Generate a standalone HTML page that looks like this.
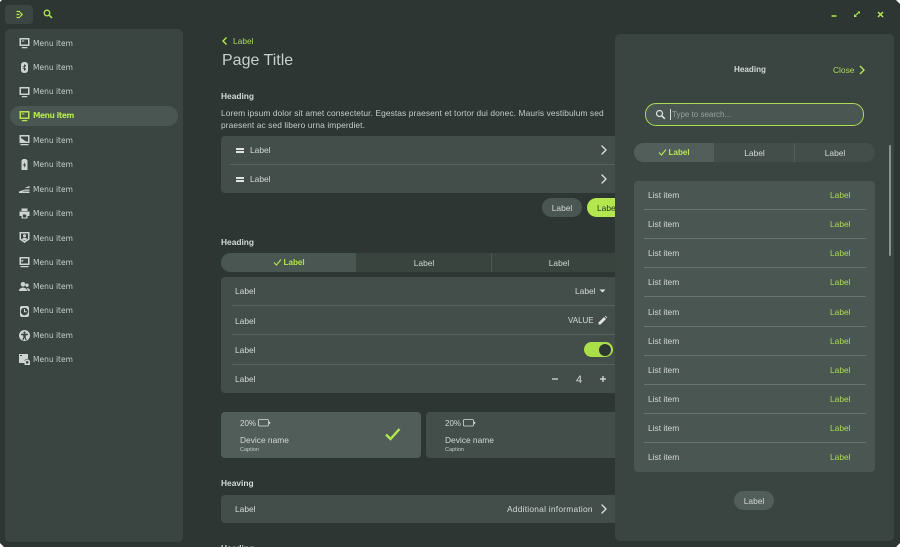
<!DOCTYPE html>
<html lang="en"><head><meta charset="utf-8"><title>Settings</title>
<style>
html,body{margin:0;padding:0;background:#2d3633}
#w{position:relative;width:900px;height:547px;overflow:hidden;background:#2d3633;font-family:"Liberation Sans",sans-serif;font-size:8.4px;color:#d3d8d5}
#w div,#w span,#w svg{position:absolute}
.t{height:12px;line-height:12px;white-space:nowrap}
.m{font-family:"DejaVu Sans",sans-serif;font-size:7.5px;left:33px;color:#c5cbc8;height:12px;line-height:12px;white-space:nowrap}
.h{font-weight:bold;color:#d3d8d5}
.a{color:#a9dc50}
.d{height:1px;background:#566360}
.i{left:19px;width:11px;height:11px;fill:#cfd4d1}
.c{fill:none;stroke:#d8dcda;stroke-width:1.4;stroke-linecap:round;stroke-linejoin:round}
.ce{text-align:center}
</style></head><body><div id="w">

<div style="left:5px;top:5px;width:28px;height:19px;background:#3b4642;border-radius:4px"></div>
<svg style="left:15px;top:10px" width="9" height="9" viewBox="0 0 9 9"><path d="M1.500 1.500h3.500M1.500 4.500h3M1.500 7.500h3.500M5 2.200l2.200 2.300L5 6.800" fill="none" stroke="#b2e84e" stroke-width="1.200"/></svg>
<svg style="left:43px;top:9px" width="10" height="10" viewBox="0 0 10 10"><circle cx="4" cy="4" r="2.800" fill="none" stroke="#b2e84e" stroke-width="1.300"/><path d="M6 6l3 3" stroke="#b2e84e" stroke-width="1.500"/></svg>
<svg style="left:830px;top:11px" width="8" height="8" viewBox="0 0 8 8"><path d="M1.500 5h5" stroke="#b2e84e" stroke-width="1.500"/></svg>
<svg style="left:853px;top:10px" width="8" height="8" viewBox="0 0 8 8"><path d="M2.500 5.500l3-3" stroke="#b2e84e" stroke-width="1.200"/><path d="M4.500 1.500h2.500v2.500zM1 4v3h3z" fill="#b2e84e"/></svg>
<svg style="left:877px;top:11px" width="7" height="7" viewBox="0 0 7 7"><path d="M1 1l5 5M6 1L1 6" stroke="#b2e84e" stroke-width="1.500"/></svg>

<div style="left:5px;top:29px;width:178px;height:513px;background:#3a4541;border-radius:5px"></div>
<div style="left:10px;top:106px;width:168px;height:20px;background:#4a5652;border-radius:10px"></div>

<svg class="i" style="top:38px" viewBox="0 0 11 11"><path fill-rule="evenodd" d="M.5 0h10v8H.5zM2 1.500v5h7v-5zM2.800 2.500h2.500v1H2.800zM2.800 9h5.500v1.300H2.800z"/></svg><span class="m" style="top:38px">Menu item</span>
<svg class="i" style="top:62px" viewBox="0 0 11 11"><path fill-rule="evenodd" d="M5.500 0C8 0 9 1.500 9 3v5c0 1.500-1 3-3.500 3S2 9.500 2 8V3c0-1.500 1-3 3.500-3zM5 2v2.800L3.800 3.800l-.5.500 1.700 1.200-1.700 1.200.5.500L5 6.200V9l2.200-1.700-1.600-1.800 1.600-1.800z"/></svg><span class="m" style="top:62px">Menu item</span>
<svg class="i" style="top:87px" viewBox="0 0 11 11"><path fill-rule="evenodd" d="M.5 0h10v8H.5zM2 1.500v5h7v-5zM2.800 9h5.500v1.300H2.800z"/></svg><span class="m" style="top:86px">Menu item</span>
<svg class="i" style="top:111px;fill:#b2e84e" viewBox="0 0 11 11"><path fill-rule="evenodd" d="M.5 0h10v8H.5zM2 1.500v5h7v-5zM2.800 2.500h2.500v1H2.800zM2.800 9h5.500v1.300H2.800z"/></svg><span class="m" style="top:110px;font-weight:bold;color:#b2e84e;letter-spacing:-.45px">Menu item</span>
<svg class="i" style="top:135px" viewBox="0 0 11 11"><path fill-rule="evenodd" d="M.5 0h10v8H.5zM2 1.500v5h7v-5zM2 3l5 3.500H2zM1.500 9h8v1.200h-8z"/></svg><span class="m" style="top:135px">Menu item</span>
<svg class="i" style="top:159px" viewBox="0 0 11 11"><path fill-rule="evenodd" d="M2.500 1.500L4 0h3l1.500 1.500V11h-6zM5.800 3L4 6.500h1.300V9L7.200 5.500H5.800z"/></svg><span class="m" style="top:159px">Menu item</span>
<svg class="i" style="top:184px" viewBox="0 0 11 11"><path d="M0 7.500L6 5.500h4.500v1.200H5L3.500 7.500H10.500v1.500H0zM6.500 3.500l4-1.500v2h-4z"/></svg><span class="m" style="top:183.500px">Menu item</span>
<svg class="i" style="top:208px" viewBox="0 0 11 11"><path fill-rule="evenodd" d="M2.500 .5h6V3h-6zM.5 3.500h10V8H8.500v2.500h-6V8h-2zM3.800 6.500v3h3.400v-3z"/></svg><span class="m" style="top:208px">Menu item</span>
<svg class="i" style="top:232px" viewBox="0 0 11 11"><path fill-rule="evenodd" d="M.5 0h10v7.500L5.500 11 .5 7.500zM2 1.500v5.200l3.500 2.400L9 6.700V1.500zM5.500 2.300a1.500 1.500 0 110 3 1.500 1.500 0 010-3zM3 7.300c0-2.100 5-2.100 5 0L5.500 8.500z"/></svg><span class="m" style="top:232.500px">Menu item</span>
<svg class="i" style="top:257px" viewBox="0 0 11 11"><path fill-rule="evenodd" d="M.5 0h10v8H.5zM2 1.500v5h7v-5zM2.500 2.500l2.300 1.300-2.300 1.300zM1.500 9h8v1.200h-8z"/></svg><span class="m" style="top:257px">Menu item</span>
<svg class="i" style="top:281px" viewBox="0 0 11 11"><path d="M4 1a2.300 2.300 0 110 4.600A2.300 2.300 0 014 1zM8 2.500a1.700 1.700 0 110 3.400 1.700 1.700 0 010-3.400zM0 10c0-4.500 8-4.500 8 0zM8.700 10c0-1.200-.5-2.400-1.200-3 1.700 0 3.500 1 3.500 3z"/></svg><span class="m" style="top:281px">Menu item</span>
<svg class="i" style="top:306px" viewBox="0 0 11 11"><path fill-rule="evenodd" d="M2 0h7l1 1.500v8L9 11H2L1 9.500v-8zM5.500 1.800a3.700 3.700 0 100 7.400 3.700 3.700 0 000-7.400zM5 3h1v2.300h1.700v1H5z"/></svg><span class="m" style="top:305px">Menu item</span>
<svg class="i" style="top:330px" viewBox="0 0 11 11"><path fill-rule="evenodd" d="M5.500 0a5.500 5.500 0 110 11 5.500 5.500 0 010-11zM5.500 1.500a1.100 1.100 0 100 2.200 1.100 1.100 0 000-2.200zM2 3.800v1.200l2.300.5v1.800L3.300 10l1 .4 1.200-2.600 1.200 2.600 1-.4-1-2.700V5.500L9 5V3.800z"/></svg><span class="m" style="top:330px">Menu item</span>
<svg class="i" style="top:354px" viewBox="0 0 11 11"><path fill-rule="evenodd" d="M0 0h9v5H7L5.500 6.500V9H0zM1 1v1h2V1zM7.500 5.500h2l1.500 1.500v4H5.500V7zM8.200 7a1.300 1.300 0 100 2.600 1.300 1.300 0 000-2.600z"/></svg><span class="m" style="top:354px">Menu item</span>

<svg style="left:221px;top:36px" width="8" height="10" viewBox="0 0 8 10"><path d="M5.500 1.500L2 5l3.500 3.500" fill="none" stroke="#b2e84e" stroke-width="1.400"/></svg>
<span class="t a" style="left:233px;top:35px">Label</span>
<span class="t" style="left:222px;top:50px;height:21px;line-height:21px;font-size:16px;color:#c9cfcc">Page Title</span>
<span class="t h" style="left:221px;top:90px">Heading</span>
<span class="t" style="left:221px;top:107px;color:#c5cbc8;letter-spacing:.09px">Lorem ipsum dolor sit amet consectetur. Egestas praesent et tortor dui donec. Mauris vestibulum sed</span>
<span class="t" style="left:221px;top:119px;color:#c5cbc8;letter-spacing:.09px">praesent ac sed libero urna imperdiet.</span>

<div style="left:221px;top:136px;width:420px;height:57px;background:#434e4a;border-radius:4px"></div>
<div class="d" style="left:230px;top:164px;width:400px"></div>
<div style="left:236px;top:148px;width:8px;height:1.500px;background:#e2e5e3"></div><div style="left:236px;top:151px;width:8px;height:1.500px;background:#e2e5e3"></div>
<span class="t" style="left:250px;top:144px">Label</span>
<svg class="c" style="left:600px;top:145px" width="8" height="10" viewBox="0 0 8 10"><path d="M2 1l4 4-4 4"/></svg>
<div style="left:236px;top:177px;width:8px;height:1.500px;background:#e2e5e3"></div><div style="left:236px;top:180px;width:8px;height:1.500px;background:#e2e5e3"></div>
<span class="t" style="left:250px;top:173px">Label</span>
<svg class="c" style="left:600px;top:174px" width="8" height="10" viewBox="0 0 8 10"><path d="M2 1l4 4-4 4"/></svg>

<div style="left:542px;top:198px;width:40px;height:19px;background:#4a5652;border-radius:10px"></div>
<span class="t ce" style="left:542px;top:202px;width:40px">Label</span>
<div style="left:587px;top:198px;width:50px;height:19px;background:#b2e84e;border-radius:10px"></div>
<span class="t" style="left:597px;top:202px;color:#2d3633">Label</span>

<span class="t h" style="left:221px;top:236px">Heading</span>
<div style="left:221px;top:253px;width:420px;height:19px;background:#39443f;border-radius:10px"></div>
<div style="left:221px;top:253px;width:135px;height:19px;background:#4a5652;border-radius:10px 0 0 10px"></div>
<div style="left:491px;top:253px;width:1px;height:19px;background:#4a5652"></div>
<svg style="left:273px;top:258px" width="9" height="9" viewBox="0 0 9 9"><path d="M1 4.500l2.500 2.500L8 1.500" fill="none" stroke="#b2e84e" stroke-width="1.100"/></svg>
<span class="t h" style="left:283.500px;top:257px;color:#b2e84e;font-size:8.100px">Label</span>
<span class="t ce" style="left:357px;top:257px;width:134px">Label</span>
<span class="t ce" style="left:492px;top:257px;width:134px">Label</span>

<div style="left:221px;top:277px;width:420px;height:116px;background:#434e4a;border-radius:4px"></div>
<div class="d" style="left:232px;top:305px;width:400px"></div>
<div class="d" style="left:232px;top:334px;width:400px"></div>
<div class="d" style="left:232px;top:364px;width:400px"></div>
<span class="t" style="left:235px;top:285px">Label</span>
<span class="t" style="left:235px;top:315px">Label</span>
<span class="t" style="left:235px;top:344px">Label</span>
<span class="t" style="left:235px;top:373px">Label</span>
<span class="t" style="left:575px;top:285px">Label</span>
<svg style="left:598px;top:288px" width="9" height="6" viewBox="0 0 9 6"><path d="M1.500 1.500h6L4.500 4.500z" fill="#e2e5e3"/></svg>
<span class="t" style="left:568px;top:315px;font-size:8px">VALUE</span>
<svg style="left:597px;top:315px" width="11" height="11" viewBox="0 0 11 11"><path d="M1.500 9.500V7.500L7 2l2 2-5.500 5.500zM7.800 1.200l.7-.4 1.700 1.700-.4.700z" fill="#e2e5e3"/></svg>
<div style="left:584px;top:342px;width:29px;height:15px;background:#a9e049;border-radius:8px"></div>
<div style="left:599px;top:344px;width:12px;height:12px;border-radius:6px;background:#2d3633"></div>
<svg style="left:551px;top:375px" width="8" height="8" viewBox="0 0 8 8"><path d="M1 4h6" stroke="#e2e5e3" stroke-width="1.200"/></svg>
<span class="t" style="left:576px;top:373.500px;font-size:11px">4</span>
<svg style="left:599px;top:375px" width="8" height="8" viewBox="0 0 8 8"><path d="M1 4h6M4 1v6" stroke="#e2e5e3" stroke-width="1.200"/></svg>

<div style="left:221px;top:412px;width:200px;height:46px;background:#515d59;border-radius:4px"></div>
<div style="left:426px;top:412px;width:215px;height:46px;background:#434e4a;border-radius:4px"></div>
<span class="t" style="left:240px;top:418px;font-size:8px">20%</span>
<svg style="left:258px;top:418px" width="13" height="10" viewBox="0 0 13 10"><rect x=".5" y="1.500" width="10" height="6.500" rx="1" fill="none" stroke="#d8dcda" stroke-width=".8"/><rect x="11" y="3.800" width="1.200" height="2" fill="#d8dcda"/></svg>
<span class="t" style="left:240px;top:434px">Device name</span>
<span class="t" style="left:240px;top:443.500px;font-size:5.500px;color:#c5cbc8">Caption</span>
<svg style="left:384px;top:426px" width="18" height="16" viewBox="0 0 18 16"><path d="M2 8.500l4.500 4.500L15.500 3" fill="none" stroke="#b2e84e" stroke-width="2.400"/></svg>
<span class="t" style="left:445px;top:418px;font-size:8px">20%</span>
<svg style="left:463px;top:418px" width="13" height="10" viewBox="0 0 13 10"><rect x=".5" y="1.500" width="10" height="6.500" rx="1" fill="none" stroke="#d8dcda" stroke-width=".8"/><rect x="11" y="3.800" width="1.200" height="2" fill="#d8dcda"/></svg>
<span class="t" style="left:445px;top:434px">Device name</span>
<span class="t" style="left:445px;top:443.500px;font-size:5.500px;color:#c5cbc8">Caption</span>

<span class="t h" style="left:221px;top:477px">Heaving</span>
<div style="left:221px;top:495px;width:420px;height:28px;background:#434e4a;border-radius:4px"></div>
<span class="t" style="left:235px;top:503px">Label</span>
<span class="t" style="left:507px;top:503px;letter-spacing:.24px">Additional information</span>
<svg class="c" style="left:600px;top:504px" width="8" height="10" viewBox="0 0 8 10"><path d="M2 1l4 4-4 4"/></svg>
<span class="t h" style="left:221px;top:542px">Heading</span>

<div style="left:615px;top:34px;width:279px;height:507px;background:#3a4541;border-radius:5px"></div>
<span class="t h ce" style="left:715px;top:64px;width:70px;font-size:8.100px">Heading</span>
<span class="t a" style="left:833px;top:64px">Close</span>
<svg style="left:858px;top:65px" width="8" height="10" viewBox="0 0 8 10"><path d="M2 1l4 4-4 4" fill="none" stroke="#b2e84e" stroke-width="1.400"/></svg>

<div style="left:645px;top:103px;width:217px;height:21px;background:#4a5652;border:1px solid #a9dc50;border-radius:11px"></div>
<svg style="left:655px;top:109px" width="11" height="11" viewBox="0 0 11 11"><circle cx="4.500" cy="4.500" r="3" fill="none" stroke="#e2e5e3" stroke-width="1.200"/><path d="M6.800 6.800l3 3" stroke="#e2e5e3" stroke-width="1.500"/></svg>
<div style="left:670px;top:109px;width:1px;height:11px;background:#d8dcda"></div>
<span class="t" style="left:672px;top:108.500px;color:#97a19d;font-size:8px">Type to search...</span>

<div style="left:634px;top:143px;width:241px;height:19px;background:#434e4a;border-radius:10px"></div>
<div style="left:634px;top:143px;width:80px;height:19px;background:#525e5a;border-radius:10px 0 0 10px"></div>
<div style="left:794px;top:143px;width:1px;height:19px;background:#525e5a"></div>
<svg style="left:658px;top:148px" width="9" height="9" viewBox="0 0 9 9"><path d="M1 4.500l2.500 2.500L8 1.500" fill="none" stroke="#b2e84e" stroke-width="1.200"/></svg>
<span class="t h" style="left:668.500px;top:147px;color:#b2e84e;font-size:8.100px">Label</span>
<span class="t ce" style="left:715px;top:147px;width:79px">Label</span>
<span class="t ce" style="left:795px;top:147px;width:80px">Label</span>

<div style="left:634px;top:181px;width:241px;height:291px;background:#4a5652;border-radius:4px"></div>
<div class="d" style="left:644px;top:209px;width:222px;background:#667370"></div>
<div class="d" style="left:644px;top:238px;width:222px;background:#667370"></div>
<div class="d" style="left:644px;top:267px;width:222px;background:#667370"></div>
<div class="d" style="left:644px;top:296px;width:222px;background:#667370"></div>
<div class="d" style="left:644px;top:326px;width:222px;background:#667370"></div>
<div class="d" style="left:644px;top:355px;width:222px;background:#667370"></div>
<div class="d" style="left:644px;top:384px;width:222px;background:#667370"></div>
<div class="d" style="left:644px;top:413px;width:222px;background:#667370"></div>
<div class="d" style="left:644px;top:442px;width:222px;background:#667370"></div>
<span class="t" style="left:648px;top:189px">List item</span><span class="t a" style="left:830px;top:189px">Label</span>
<span class="t" style="left:648px;top:218px">List item</span><span class="t a" style="left:830px;top:218px">Label</span>
<span class="t" style="left:648px;top:247px">List item</span><span class="t a" style="left:830px;top:247px">Label</span>
<span class="t" style="left:648px;top:276px">List item</span><span class="t a" style="left:830px;top:276px">Label</span>
<span class="t" style="left:648px;top:306px">List item</span><span class="t a" style="left:830px;top:306px">Label</span>
<span class="t" style="left:648px;top:335px">List item</span><span class="t a" style="left:830px;top:335px">Label</span>
<span class="t" style="left:648px;top:364px">List item</span><span class="t a" style="left:830px;top:364px">Label</span>
<span class="t" style="left:648px;top:393px">List item</span><span class="t a" style="left:830px;top:393px">Label</span>
<span class="t" style="left:648px;top:422px">List item</span><span class="t a" style="left:830px;top:422px">Label</span>
<span class="t" style="left:648px;top:451px">List item</span><span class="t a" style="left:830px;top:451px">Label</span>

<div style="left:734px;top:491px;width:40px;height:19px;background:#525e5a;border-radius:10px"></div>
<span class="t ce" style="left:734px;top:494.500px;width:40px">Label</span>
<div style="left:889px;top:145px;width:2px;height:111px;background:#88938f;border-radius:1px"></div>

<div style="left:0;top:0;width:2px;height:2px;background:#fff;clip-path:polygon(0 0,100% 0,0 100%)"></div>
<div style="left:896px;top:0;width:4px;height:4px;background:#fff;clip-path:polygon(0 0,100% 0,100% 100%)"></div>
<div style="left:896px;top:543px;width:4px;height:4px;background:#fff;clip-path:polygon(100% 0,100% 100%,0 100%)"></div>
<div style="left:0;top:543px;width:4px;height:4px;background:#fff;clip-path:polygon(0 0,100% 100%,0 100%)"></div>
</div></body></html>
